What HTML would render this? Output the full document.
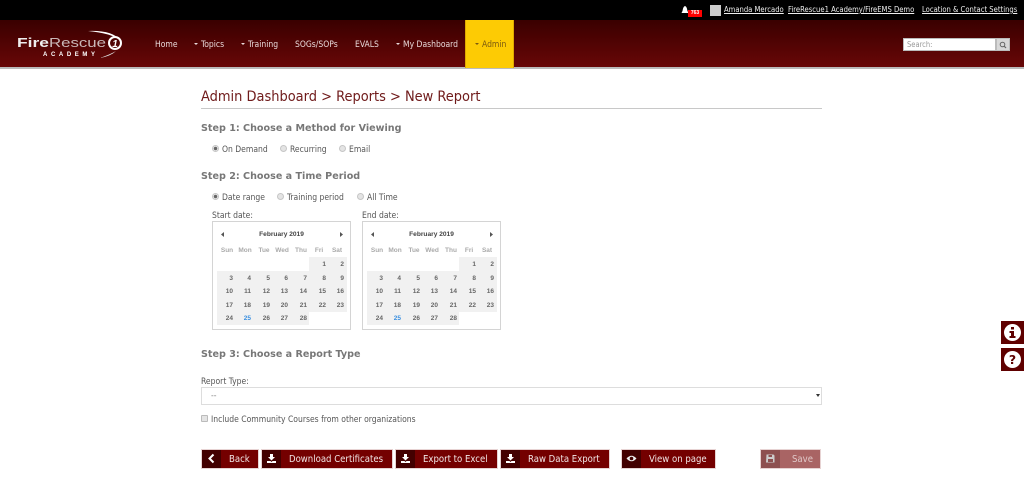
<!DOCTYPE html>
<html><head><meta charset="utf-8"><title>New Report</title>
<style>
html,body{margin:0;padding:0;background:#fff;width:1024px;height:497px;overflow:hidden}
body{font-family:"DejaVu Sans Condensed","DejaVu Sans","Liberation Sans",sans-serif;position:relative;color:#555;font-size:8.5px;filter:blur(.3px)}
.a{position:absolute;white-space:nowrap;line-height:12px}
#top{position:absolute;left:0;top:0;width:1024px;height:20px;background:#000}
#bar{position:absolute;left:0;top:20px;width:1024px;height:47px;background:linear-gradient(#3a0000,#680707)}
#sh{position:absolute;left:0;top:67px;width:1024px;height:2px;background:#bbb}
.tl{color:#eee;text-decoration:underline;font-size:7.6px;top:4px}
.n{color:#e8dada;font-size:8.5px;top:39px}
.n i,.adm i{display:inline-block;width:0;height:0;border:2px solid transparent;border-top:2.5px solid currentColor;border-bottom:0;margin-right:3px;vertical-align:2px}
h3{position:absolute;margin:0;left:201px;font-family:"DejaVu Sans",sans-serif;font-size:9.6px;font-weight:bold;color:#777;line-height:12px;white-space:nowrap}
.r{position:absolute;width:7px;height:7px;border-radius:50%;background:#e4e4e4;border:1px solid #c6c6c6;box-sizing:border-box}
.r.on{background:radial-gradient(#666 0 1.5px,#eee 2px)}
.cal{position:absolute;top:221px;width:139px;height:109px;border:1px solid #d4d4d4;box-sizing:border-box;background:#fff}
.cal .g{position:absolute;background:#f1f1f1}
.cal b{position:absolute;font-size:6.5px;line-height:8px;color:#666;font-family:"Liberation Sans",sans-serif;width:18px;text-align:right;margin:1px 0 0 -1px}
.cal b.h{color:#aaa;text-align:center;font-weight:bold;margin:0}
.cal b.blue{color:#3a8fe0}
.cal .m{position:absolute;left:0;right:0;top:8px;text-align:center;font:bold 6.6px/10px "Liberation Sans",sans-serif;color:#444}
.btn{position:absolute;top:449px;height:20px;background:#740000;box-shadow:0 0 0 1px #e7d3d3 inset;color:#f2e6e6;font-size:9.5px;line-height:20px;white-space:nowrap;overflow:hidden}
.btn .ic{position:absolute;left:1px;top:1px;width:19px;height:18px;background:#430000}
.btn .ic svg{position:absolute;left:4px;top:3px}
.btn span{position:absolute;top:0}
.side{position:absolute;left:1001px;width:23px;height:23px;background:#5f0000}
</style></head><body>
<div id="top"></div><div id="bar"></div><div id="sh"></div>
<svg class="a" style="left:681px;top:6px" width="8" height="9" viewBox="0 0 8 9"><path d="M4 0C2 1 2 3 1.500 5L.5 7h7L6.500 5C6 3 6 1 4 0z" fill="#fff"/></svg>
<div class="a" style="left:688px;top:10px;width:14px;height:7px;background:#f00;color:#fff;font:bold 5px/7px 'Liberation Sans',sans-serif;text-align:center">763</div>
<div class="a" style="left:710px;top:5px;width:11px;height:11px;background:#ccc"></div>
<div class="a tl" style="left:724px">Amanda Mercado</div>
<div class="a tl" style="left:788px">FireRescue1 Academy/FireEMS Demo</div>
<div class="a tl" style="left:922px">Location &amp; Contact Settings</div>

<svg class="a" style="left:14px;top:30px" width="116" height="30" viewBox="0 0 116 30">
<text x="3" y="17" font-family="Liberation Sans,sans-serif" font-size="12.5" font-weight="bold" fill="#eee" textLength="32" lengthAdjust="spacingAndGlyphs">Fire</text>
<text x="35" y="17" font-family="Liberation Sans,sans-serif" font-size="12.5" fill="#c9b8b8" textLength="57" lengthAdjust="spacingAndGlyphs">Rescue</text>
<circle cx="101" cy="13" r="6" fill="none" stroke="#fff" stroke-width="2"/>
<text x="101" y="17" text-anchor="middle" font-family="Liberation Sans,sans-serif" font-size="10" font-weight="bold" font-style="italic" fill="#fff">1</text>
<path d="M74 1Q98 0 106 10Q96 3 74 1z" fill="#fff"/>
<path d="M86 28Q97 26 102 21Q97 24 86 28z" fill="#ddd"/>
<text x="29" y="26" font-family="Liberation Sans,sans-serif" font-size="6" font-weight="bold" fill="#fff" textLength="52">ACADEMY</text>
</svg>

<div class="a n" style="left:155px">Home</div>
<div class="a n" style="left:194px"><i></i>Topics</div>
<div class="a n" style="left:241px"><i></i>Training</div>
<div class="a n" style="left:295px">SOGs/SOPs</div>
<div class="a n" style="left:355px">EVALS</div>
<div class="a n" style="left:396px"><i></i>My Dashboard</div>
<div class="a" style="left:465px;top:20px;width:49px;height:48px;background:#fdcb04;border-left:1px solid #dfa900;border-right:1px solid #dfa900;box-sizing:border-box"></div>
<div class="a n adm" style="left:475px;color:#7a5a10"><i></i>Admin</div>

<div class="a" style="left:903px;top:38px;width:93px;height:13px;background:#fff;border:1px solid #bbb;box-sizing:border-box;color:#999;font-size:7.5px;line-height:11px;padding-left:3px">Search:</div>
<div class="a" style="left:996px;top:38px;width:14px;height:13px;background:#d8d8d8;border:1px solid #bbb;box-sizing:border-box"></div>
<svg class="a" style="left:999px;top:41px" width="8" height="8" viewBox="0 0 8 8"><circle cx="3.500" cy="3.500" r="2.300" fill="none" stroke="#666"/><path d="M5 5l2 2" stroke="#666" stroke-width="1.200"/></svg>

<div class="a" style="left:201px;top:89px;font-size:14.45px;line-height:17px;color:#6f1a1a">Admin Dashboard &gt; Reports &gt; New Report</div>
<div class="a" style="left:201px;top:108px;width:621px;height:1px;background:#c8c8c8"></div>

<h3 style="top:123px">Step 1: Choose a Method for Viewing</h3>
<div class="r on" style="left:212px;top:145px"></div><div class="a" style="left:222px;top:144px">On Demand</div>
<div class="r" style="left:280px;top:145px"></div><div class="a" style="left:290px;top:144px">Recurring</div>
<div class="r" style="left:339px;top:145px"></div><div class="a" style="left:349px;top:144px">Email</div>

<h3 style="top:171px">Step 2: Choose a Time Period</h3>
<div class="r on" style="left:212px;top:193px"></div><div class="a" style="left:222px;top:192px">Date range</div>
<div class="r" style="left:277px;top:193px"></div><div class="a" style="left:287px;top:192px">Training period</div>
<div class="r" style="left:357px;top:193px"></div><div class="a" style="left:367px;top:192px">All Time</div>
<div class="a" style="left:212px;top:210px">Start date:</div>
<div class="a" style="left:362px;top:210px">End date:</div>

<div class="cal" style="left:212px">
<div class="g" style="left:96px;top:35px;width:38px;height:14px"></div><div class="g" style="left:4px;top:49px;width:130px;height:41px"></div><div class="g" style="left:4px;top:90px;width:92px;height:13px"></div>
<svg style="position:absolute;left:7px;top:9px" width="5" height="7"><path d="M4 1v5L1 3.500z" fill="#555"/></svg><svg style="position:absolute;left:126px;top:9px" width="5" height="7"><path d="M1 1v5l3-2.500z" fill="#555"/></svg>
<div class="m">February 2019</div>
<b class="h" style="left:5px;top:25px">Sun</b><b class="h" style="left:23px;top:25px">Mon</b><b class="h" style="left:42px;top:25px">Tue</b><b class="h" style="left:60px;top:25px">Wed</b><b class="h" style="left:79px;top:25px">Thu</b><b class="h" style="left:97px;top:25px">Fri</b><b class="h" style="left:115px;top:25px">Sat</b>
<b style="left:96px;top:38px">1</b><b style="left:114px;top:38px">2</b>
<b style="left:3px;top:52px">3</b><b style="left:21px;top:52px">4</b><b style="left:40px;top:52px">5</b><b style="left:58px;top:52px">6</b><b style="left:77px;top:52px">7</b><b style="left:96px;top:52px">8</b><b style="left:114px;top:52px">9</b>
<b style="left:3px;top:65px">10</b><b style="left:21px;top:65px">11</b><b style="left:40px;top:65px">12</b><b style="left:58px;top:65px">13</b><b style="left:77px;top:65px">14</b><b style="left:96px;top:65px">15</b><b style="left:114px;top:65px">16</b>
<b style="left:3px;top:79px">17</b><b style="left:21px;top:79px">18</b><b style="left:40px;top:79px">19</b><b style="left:58px;top:79px">20</b><b style="left:77px;top:79px">21</b><b style="left:96px;top:79px">22</b><b style="left:114px;top:79px">23</b>
<b style="left:3px;top:92px">24</b><b class="blue" style="left:21px;top:92px">25</b><b style="left:40px;top:92px">26</b><b style="left:58px;top:92px">27</b><b style="left:77px;top:92px">28</b>
</div>

<div class="cal" style="left:362px">
<div class="g" style="left:96px;top:35px;width:38px;height:14px"></div><div class="g" style="left:4px;top:49px;width:130px;height:41px"></div><div class="g" style="left:4px;top:90px;width:92px;height:13px"></div>
<svg style="position:absolute;left:7px;top:9px" width="5" height="7"><path d="M4 1v5L1 3.500z" fill="#555"/></svg><svg style="position:absolute;left:126px;top:9px" width="5" height="7"><path d="M1 1v5l3-2.500z" fill="#555"/></svg>
<div class="m">February 2019</div>
<b class="h" style="left:5px;top:25px">Sun</b><b class="h" style="left:23px;top:25px">Mon</b><b class="h" style="left:42px;top:25px">Tue</b><b class="h" style="left:60px;top:25px">Wed</b><b class="h" style="left:79px;top:25px">Thu</b><b class="h" style="left:97px;top:25px">Fri</b><b class="h" style="left:115px;top:25px">Sat</b>
<b style="left:96px;top:38px">1</b><b style="left:114px;top:38px">2</b>
<b style="left:3px;top:52px">3</b><b style="left:21px;top:52px">4</b><b style="left:40px;top:52px">5</b><b style="left:58px;top:52px">6</b><b style="left:77px;top:52px">7</b><b style="left:96px;top:52px">8</b><b style="left:114px;top:52px">9</b>
<b style="left:3px;top:65px">10</b><b style="left:21px;top:65px">11</b><b style="left:40px;top:65px">12</b><b style="left:58px;top:65px">13</b><b style="left:77px;top:65px">14</b><b style="left:96px;top:65px">15</b><b style="left:114px;top:65px">16</b>
<b style="left:3px;top:79px">17</b><b style="left:21px;top:79px">18</b><b style="left:40px;top:79px">19</b><b style="left:58px;top:79px">20</b><b style="left:77px;top:79px">21</b><b style="left:96px;top:79px">22</b><b style="left:114px;top:79px">23</b>
<b style="left:3px;top:92px">24</b><b class="blue" style="left:21px;top:92px">25</b><b style="left:40px;top:92px">26</b><b style="left:58px;top:92px">27</b><b style="left:77px;top:92px">28</b>
</div>

<h3 style="top:349px">Step 3: Choose a Report Type</h3>
<div class="a" style="left:201px;top:376px">Report Type:</div>
<div class="a" style="left:201px;top:387px;width:621px;height:18px;border:1px solid #ddd;box-sizing:border-box;color:#888;line-height:17px;padding-left:9px">--</div>
<div class="a" style="left:816px;top:394px;width:0;height:0;border:2px solid transparent;border-top:3px solid #333;border-bottom:0"></div>
<div class="a" style="left:201px;top:415px;width:7px;height:7px;background:#e4e4e4;border:1px solid #bbb;box-sizing:border-box;border-radius:1px"></div>
<div class="a" style="left:211px;top:414px">Include Community Courses from other organizations</div>

<div class="btn" style="left:201px;width:58px"><div class="ic"><svg width="11" height="11" viewBox="0 0 11 11"><path d="M7.500 1.500L3.500 5.500l4 4" fill="none" stroke="#fff" stroke-width="2"/></svg></div><span style="left:28px;top:.5px">Back</span></div>
<div class="btn" style="left:261px;width:132px"><div class="ic"><svg width="11" height="11" viewBox="0 0 11 11"><path d="M4 1h3v3h2L5.500 7.500 2 4h2zM1 8h3.500l1 1 1-1H10v2H1z" fill="#fff"/></svg></div><span style="left:28px;top:.5px">Download Certificates</span></div>
<div class="btn" style="left:395px;width:103px"><div class="ic"><svg width="11" height="11" viewBox="0 0 11 11"><path d="M4 1h3v3h2L5.500 7.500 2 4h2zM1 8h3.500l1 1 1-1H10v2H1z" fill="#fff"/></svg></div><span style="left:28px;top:.5px">Export to Excel</span></div>
<div class="btn" style="left:500px;width:110px"><div class="ic"><svg width="11" height="11" viewBox="0 0 11 11"><path d="M4 1h3v3h2L5.500 7.500 2 4h2zM1 8h3.500l1 1 1-1H10v2H1z" fill="#fff"/></svg></div><span style="left:28px;top:.5px">Raw Data Export</span></div>
<div class="btn" style="left:621px;width:95px"><div class="ic"><svg width="11" height="11" viewBox="0 0 11 11"><path d="M.5 5.500Q5.500 0 10.500 5.500 5.500 11 .5 5.500z" fill="#eee"/><circle cx="5.500" cy="5.500" r="1.800" fill="#430000"/></svg></div><span style="left:28px;top:.5px">View on page</span></div>
<div class="btn" style="left:760px;width:61px;background:#a96464;color:#e0c8c8"><div class="ic" style="background:#8d5050"><svg width="11" height="11" viewBox="0 0 11 11"><path d="M1.500 1.500h7l1 1v7h-8.500z" fill="#ccc"/><rect x="3" y="6" width="5" height="3" fill="#8d5050"/><rect x="3.500" y="2" width="3.500" height="2" fill="#8d5050"/></svg></div><span style="left:32px;top:.5px">Save</span></div>

<div class="side" style="top:321px"><svg width="23" height="23" viewBox="0 0 23 23"><circle cx="11.500" cy="11.500" r="8.500" fill="#fff"/><rect x="10" y="6" width="3" height="2.500" fill="#5f0000"/><path d="M8.500 10h4.500v5h1.500v2h-6v-2H10v-3H8.500z" fill="#5f0000"/></svg></div>
<div class="side" style="top:348px"><svg width="23" height="23" viewBox="0 0 23 23"><circle cx="11.500" cy="11.500" r="8.500" fill="#fff"/><text x="11.500" y="16" text-anchor="middle" font-family="DejaVu Sans,sans-serif" font-size="12.5" font-weight="bold" fill="#5f0000">?</text></svg></div>
</body></html>
